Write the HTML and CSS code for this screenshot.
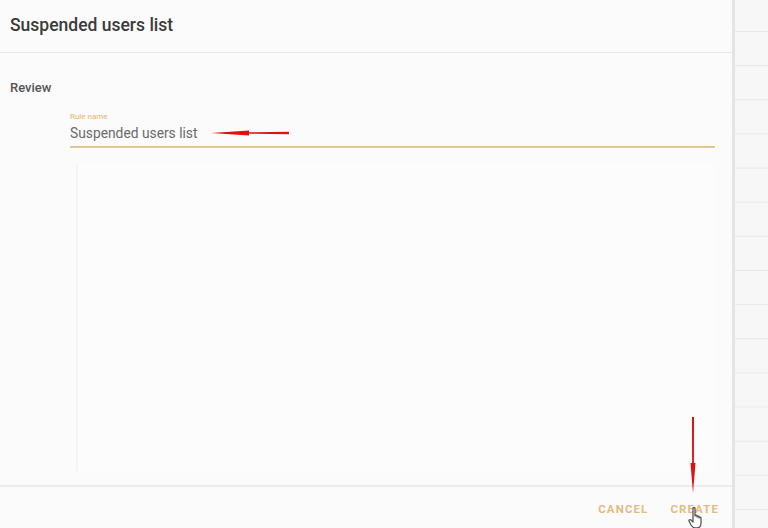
FILE: index.html
```html
<!DOCTYPE html>
<html>
<head>
<meta charset="utf-8">
<link rel="stylesheet" href="styles.css">
</head>
<body>
<div class="page">
  <div class="dialog">
    <div class="header"><h1 class="title">Suspended users list</h1></div>
    <div class="body">
      <div class="section-label">Review</div>
      <div class="field">
        <div class="field-label">Rule name</div>
        <div class="field-input">Suspended users list</div>
      </div>
      <div class="preview"></div>
    </div>
    <div class="footer">
      <button class="btn">CANCEL</button>
      <button class="btn">CREATE</button>
    </div>
  </div>
  <div class="side"></div>

  <svg class="arrow-left" width="80" height="10" viewBox="0 0 80 10">
    <path d="M0 5 L38 2.6 L38 4.2 L78 3.8 L78 6.2 L38 5.8 L38 7.4 Z" fill="#e01010"/>
  </svg>
  <svg class="arrow-down" width="8" height="76" viewBox="0 0 8 76">
    <path d="M3 0 L5 0 L4.9 46 L6.5 46 L4 76 L1.5 46 L3.1 46 Z" fill="#e01010"/>
  </svg>
  <svg class="cursor" width="18" height="22" viewBox="0 0 18 22">
    <path d="M5 1.5 C5 0.5 7 0.5 7 1.5 L7 9 C7 8 9 8 9 9 L9 10 C9 9 11 9 11 10 L11 11 C11 10 13 10 13 11 L13 16 C13 19 11.5 21 9 21 L7 21 C5 21 4 19.5 3 18 L1 14 C0.5 13 2 12 3 13 L5 15 Z" fill="#fff" stroke="#555" stroke-width="1.3" stroke-linejoin="round"/>
  </svg>
</div>
</body>
</html>
```

FILE: styles.css
```css
html, body {
  margin: 0;
  padding: 0;
}
body {
  width: 768px;
  height: 528px;
  overflow: hidden;
  font-family: Roboto, "Liberation Sans", sans-serif;
  background: #f6f6f6;
}
.page {
  position: relative;
  display: flex;
  width: 768px;
  height: 528px;
}
.dialog {
  width: 732px;
  height: 528px;
  display: flex;
  flex-direction: column;
  background: #fbfbfb;
  border-right: 3px solid #e4e4e4;
}
.header {
  height: 52px;
  border-bottom: 1px solid #e8e8e8;
  display: flex;
  align-items: center;
  padding-left: 10px;
}
.title {
  margin: 0;
  font-size: 17.5px;
  font-weight: 500;
  color: #3a3a3a;
  margin-top: -2px;
}
.body {
  flex: 1;
  display: flex;
  flex-direction: column;
  padding-top: 27px;
}
.section-label {
  padding-left: 10px;
  font-size: 13px;
  font-weight: 500;
  color: #555;
  line-height: 16px;
}
.field {
  margin: 16px 17px 0 70px;
}
.field-label {
  font-size: 8px;
  color: #e2b46c;
  line-height: 10px;
}
.field-input {
  font-size: 13.8px;
  color: #6a6a6a;
  line-height: 17px;
  margin-top: 3px;
  padding-bottom: 4px;
  border-bottom: 2px solid #e8c48f;
}
.preview {
  flex: 1;
  margin: 16px 17px 14px 76px;
  border-left: 2px solid #f4f4f4;
  background: #fcfcfc;
}
.footer {
  height: 43px;
  border-top: 2px solid #ececec;
  display: flex;
  justify-content: flex-end;
  align-items: center;
  gap: 22px;
  padding-right: 13px;
  padding-top: 2px;
  box-sizing: border-box;
}
.btn {
  border: none;
  background: none;
  padding: 0;
  font-family: Roboto, "Liberation Sans", sans-serif;
  font-size: 11.5px;
  font-weight: 700;
  letter-spacing: 1.1px;
  color: #e3bc80;
}
.side {
  flex: 1;
  background-color: #f7f7f7;
  background-image: linear-gradient(#e8e8e8 1px, transparent 1px);
  background-size: 100% 34.15px;
  background-position: 0 31px;
}
.arrow-left {
  position: absolute;
  left: 211px;
  top: 128px;
}
.arrow-down {
  position: absolute;
  left: 689px;
  top: 417px;
}
.cursor {
  position: absolute;
  left: 688px;
  top: 507px;
}
```
